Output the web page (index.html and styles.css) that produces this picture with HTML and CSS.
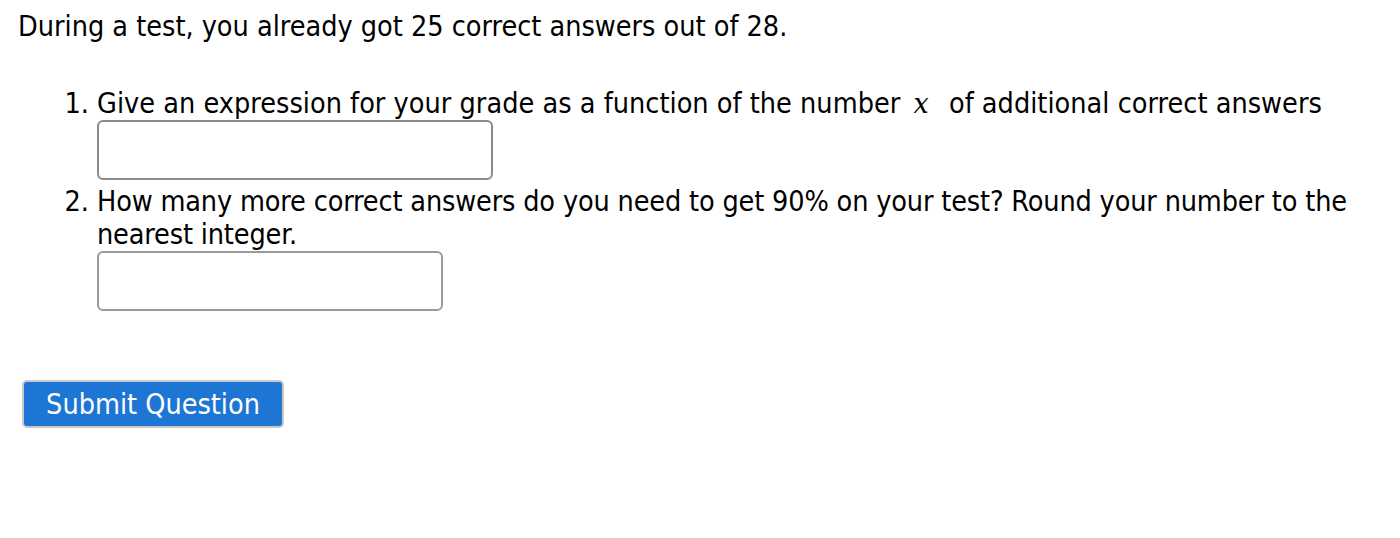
FILE: index.html
```html
<!DOCTYPE html>
<html lang="en"><head><meta charset="utf-8"><link rel="stylesheet" href="styles.css"></head>
<body>
<div class="question">
  <p class="intro">During a test, you already got 25 correct answers out of 28.</p>
  <ol class="parts">
    <li>
      <div class="prompt first">Give an expression for your grade as a function of the number <span class="math">x</span> of additional correct answers</div>
      <input class="answer wide" type="text">
    </li>
    <li>
      <div class="prompt second">How many more correct answers do you need to get 90% on your test? Round your number to the nearest integer.</div>
      <input class="answer narrow" type="text">
    </li>
  </ol>
  <div class="actions"><button class="submit" type="button">Submit Question</button></div>
</div>
</body></html>
```
FILE: styles.css
```css
body{margin:8px;background:#fff;color:#000;}
.question{padding:2px 8px 0 10px;font-family:"DejaVu Sans Condensed","DejaVu Sans",sans-serif;font-size:28.5px;line-height:33px;}
.intro{margin:0;}
.parts{margin:44px 0 0 0;padding-left:79px;}
.parts li{margin:0;}
.prompt{line-height:33px;}
.first{letter-spacing:0.03px;}
.second{letter-spacing:-0.15px;}
.math{font-family:"DejaVu Serif","Liberation Serif",serif;font-style:italic;font-size:27px;letter-spacing:0;padding:0 12px 0 5px;}
.answer{display:block;box-sizing:border-box;height:60px;margin:0 0 5px 0;border:2px solid #8a8a8a;border-radius:6px;background:#fff;font:inherit;padding:0 8px;}
.wide{width:396px;}
.narrow{width:346px;border-color:#9a9a9a;}
.actions{margin-top:69px;padding-left:4px;}
.submit{display:block;box-sizing:border-box;width:262px;height:48px;background:#1e76d4;color:#fff;border:2px solid #c8c8c8;border-radius:5px;font-family:"DejaVu Sans Condensed","DejaVu Sans",sans-serif;font-size:28.5px;padding:0;cursor:pointer;}
```
